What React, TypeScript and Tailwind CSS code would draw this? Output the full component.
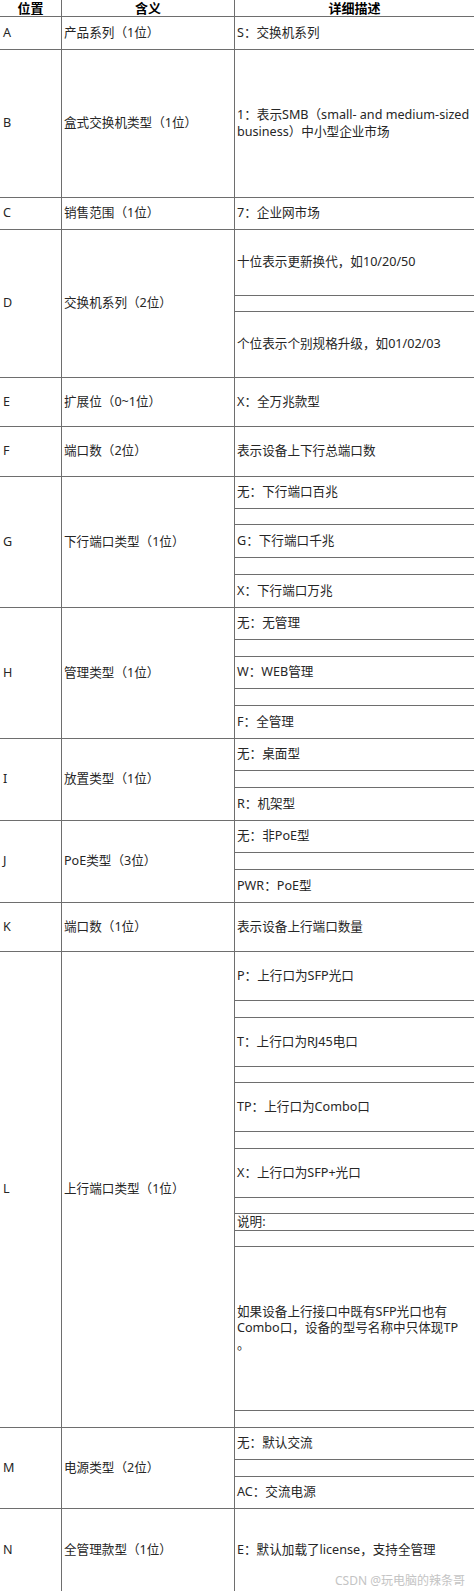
import React from 'react';

type Sub = { h?: number; text?: React.ReactNode };
type Row = { pos: string; meaning: string; h: number; subs: Sub[] };

const rows: Row[] = [
  { pos: 'A', meaning: '产品系列（1位）', h: 33, subs: [{ text: 'S：交换机系列' }] },
  {
    pos: 'B',
    meaning: '盒式交换机类型（1位）',
    h: 148,
    subs: [{ text: <>1：表示SMB（small- and medium-sized<br />business）中小型企业市场</> }],
  },
  { pos: 'C', meaning: '销售范围（1位）', h: 32, subs: [{ text: '7：企业网市场' }] },
  {
    pos: 'D',
    meaning: '交换机系列（2位）',
    h: 148,
    subs: [{ h: 66, text: '十位表示更新换代，如10/20/50' }, { h: 16 }, { text: '个位表示个别规格升级，如01/02/03' }],
  },
  { pos: 'E', meaning: '扩展位（0~1位）', h: 49, subs: [{ text: 'X：全万兆款型' }] },
  { pos: 'F', meaning: '端口数（2位）', h: 50, subs: [{ text: '表示设备上下行总端口数' }] },
  {
    pos: 'G',
    meaning: '下行端口类型（1位）',
    h: 131,
    subs: [
      { h: 32, text: '无：下行端口百兆' },
      { h: 16 },
      { h: 33, text: 'G：下行端口千兆' },
      { h: 17 },
      { text: 'X：下行端口万兆' },
    ],
  },
  {
    pos: 'H',
    meaning: '管理类型（1位）',
    h: 131,
    subs: [
      { h: 32, text: '无：无管理' },
      { h: 17 },
      { h: 32, text: 'W：WEB管理' },
      { h: 17 },
      { text: 'F：全管理' },
    ],
  },
  {
    pos: 'I',
    meaning: '放置类型（1位）',
    h: 82,
    subs: [{ h: 32, text: '无：桌面型' }, { h: 17 }, { text: 'R：机架型' }],
  },
  {
    pos: 'J',
    meaning: 'PoE类型（3位）',
    h: 82,
    subs: [{ h: 32, text: '无：非PoE型' }, { h: 17 }, { text: 'PWR：PoE型' }],
  },
  { pos: 'K', meaning: '端口数（1位）', h: 49, subs: [{ text: '表示设备上行端口数量' }] },
  {
    pos: 'L',
    meaning: '上行端口类型（1位）',
    h: 476,
    subs: [
      { h: 49, text: 'P：上行口为SFP光口' },
      { h: 17 },
      { h: 49, text: 'T：上行口为RJ45电口' },
      { h: 16 },
      { h: 49, text: 'TP：上行口为Combo口' },
      { h: 17 },
      { h: 49, text: 'X：上行口为SFP+光口' },
      { h: 16 },
      { h: 17, text: '说明:' },
      { h: 16 },
      {
        h: 164,
        text: <>如果设备上行接口中既有SFP光口也有<br />Combo口，设备的型号名称中只体现TP<br />。</>,
      },
      {},
    ],
  },
  {
    pos: 'M',
    meaning: '电源类型（2位）',
    h: 81,
    subs: [{ h: 32, text: '无：默认交流' }, { h: 17 }, { text: 'AC：交流电源' }],
  },
  { pos: 'N', meaning: '全管理款型（1位）', h: 83, subs: [{ text: 'E：默认加载了license，支持全管理' }] },
];

export default function App() {
  return (
    <div
      className="w-[474px] overflow-hidden bg-white text-[#262626] text-[12.6px] leading-[16.5px]"
      style={{ fontFamily: '"Noto Sans", "Noto Sans CJK SC", sans-serif' }}
    >
      <div className="flex h-[17px] border-b border-[#6e6e6e] font-bold text-[13px] leading-[16px] text-black">
        <div className="w-[62px] shrink-0 border-r border-[#6e6e6e] text-center">位置</div>
        <div className="w-[173px] shrink-0 border-r border-[#6e6e6e] text-center">含义</div>
        <div className="flex-1 min-w-0 text-center">详细描述</div>
      </div>
      {rows.map((r, i) => (
        <div
          key={r.pos}
          className={`relative flex ${i < rows.length - 1 ? 'border-b border-[#6e6e6e]' : ''}`}
          style={{ height: r.h }}
        >
          <div className="w-[62px] shrink-0 border-r border-[#6e6e6e] flex items-center pl-[3px]">{r.pos}</div>
          <div className="w-[173px] shrink-0 border-r border-[#6e6e6e] flex items-center pl-[2px]">{r.meaning}</div>
          <div className="flex-1 min-w-0 flex flex-col">
            {r.subs.map((s, j) => {
              const last = j === r.subs.length - 1;
              return (
                <div
                  key={j}
                  className={`flex items-center pl-[2px] whitespace-nowrap ${last ? 'flex-1' : 'border-b border-[#6e6e6e]'}`}
                  style={last ? undefined : { height: s.h }}
                >
                  {s.text ? <div>{s.text}</div> : null}
                </div>
              );
            })}
          </div>
          {r.pos === 'N' && (
            <div className="absolute right-[9px] bottom-[3px] text-[12px] text-[#c4c4c4]">CSDN @玩电脑的辣条哥</div>
          )}
        </div>
      ))}
    </div>
  );
}
